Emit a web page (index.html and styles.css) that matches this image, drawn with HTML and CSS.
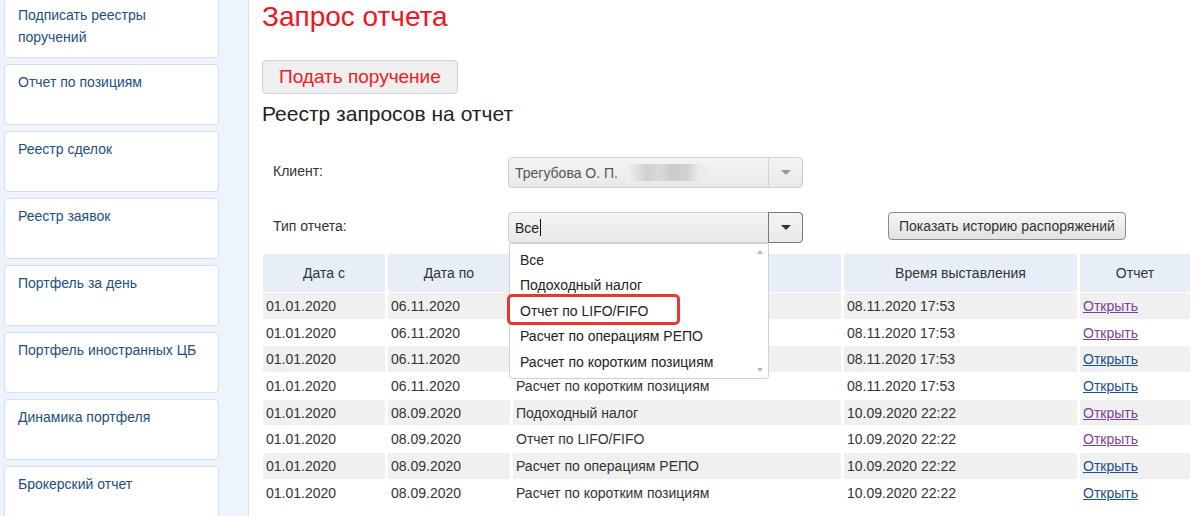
FILE: index.html
```html
<!DOCTYPE html>
<html lang="ru">
<head>
    <meta charset="UTF-8">
    <title>Запрос отчета</title>
    <link rel="stylesheet" href="styles.css">
</head>
<body>

<div class="page">
    <!-- МЕНЮ -->
    <div class="sidebar">
        <div class="menu">
            <a class="menu-item">Подписать реестры поручений</a>
            <a class="menu-item">Отчет по позициям</a>
            <a class="menu-item">Реестр сделок</a>
            <a class="menu-item">Реестр заявок</a>
            <a class="menu-item">Портфель за день</a>
            <a class="menu-item">Портфель иностранных ЦБ</a>
            <a class="menu-item">Динамика портфеля</a>
            <a class="menu-item">Брокерский отчет</a>
        </div>
    </div>

    <!-- КОНТЕНТ -->
    <div class="content">
        <div class="judul">Запрос отчета</div>
        <button class="btn-order">Подать поручение</button>
        <div class="subjudul">Реестр запросов на отчет</div>

        <div class="form-row">
            <label>Клиент:</label>
            <div class="combo disabled">
                <span class="combo-text">Трегубова О. П. <span class="blur"></span></span>
                <span class="combo-arrow"><span class="tri"></span></span>
            </div>
        </div>
        <div class="form-row">
            <label>Тип отчета:</label>
            <div class="combo active">
                <span class="combo-text">Все<span class="caret"></span></span>
                <span class="combo-arrow"><span class="tri"></span></span>
                <div class="dropdown">
                    <div class="dd-item">Все</div>
                    <div class="dd-item">Подоходный налог</div>
                    <div class="dd-item">Отчет по LIFO/FIFO</div>
                    <div class="dd-item">Расчет по операциям РЕПО</div>
                    <div class="dd-item">Расчет по коротким позициям</div>
                    <div class="dd-scroll">
                        <span class="sc-up"></span>
                        <span class="sc-down"></span>
                    </div>
                    <div class="highlight"></div>
                </div>
            </div>
            <button class="btn-history">Показать историю распоряжений</button>
        </div>

        <table class="registry">
            <thead>
                <tr>
                    <th class="c1">Дата с</th>
                    <th class="c2">Дата по</th>
                    <th class="c3">Тип отчета</th>
                    <th class="c4">Время выставления</th>
                    <th class="c5">Отчет</th>
                </tr>
            </thead>
            <tbody>
                <tr class="odd"><td>01.01.2020</td><td>06.11.2020</td><td>Подоходный налог</td><td>08.11.2020 17:53</td><td><a class="visited">Открыть</a></td></tr>
                <tr><td>01.01.2020</td><td>06.11.2020</td><td>Отчет по LIFO/FIFO</td><td>08.11.2020 17:53</td><td><a class="visited">Открыть</a></td></tr>
                <tr class="odd"><td>01.01.2020</td><td>06.11.2020</td><td>Расчет по операциям РЕПО</td><td>08.11.2020 17:53</td><td><a>Открыть</a></td></tr>
                <tr><td>01.01.2020</td><td>06.11.2020</td><td>Расчет по коротким позициям</td><td>08.11.2020 17:53</td><td><a>Открыть</a></td></tr>
                <tr class="odd"><td>01.01.2020</td><td>08.09.2020</td><td>Подоходный налог</td><td>10.09.2020 22:22</td><td><a class="visited">Открыть</a></td></tr>
                <tr><td>01.01.2020</td><td>08.09.2020</td><td>Отчет по LIFO/FIFO</td><td>10.09.2020 22:22</td><td><a class="visited">Открыть</a></td></tr>
                <tr class="odd"><td>01.01.2020</td><td>08.09.2020</td><td>Расчет по операциям РЕПО</td><td>10.09.2020 22:22</td><td><a>Открыть</a></td></tr>
                <tr><td>01.01.2020</td><td>08.09.2020</td><td>Расчет по коротким позициям</td><td>10.09.2020 22:22</td><td><a>Открыть</a></td></tr>
            </tbody>
        </table>
    </div>
</div>

</body>
</html>
```

FILE: styles.css
```css
body {
    margin: 0;
    font-family: "Liberation Sans", Arial, sans-serif;
    background-color: white;
    color: #333;
    overflow: hidden;
}

.page {
    display: flex;
    height: 516px;
}

/* меню слева */
.sidebar {
    width: 248px;
    flex-shrink: 0;
    background-color: #eef4fc;
    border-right: 1px solid #d7e3f3;
    overflow: hidden;
}

.menu {
    display: flex;
    flex-direction: column;
    gap: 6px;
    margin-top: -3px;
    padding-left: 4px;
}

.menu-item {
    display: block;
    box-sizing: border-box;
    width: 215px;
    height: 61px;
    flex-shrink: 0;
    padding: 6px 12px 0 13px;
    background-color: white;
    border: 1px solid #d3dff0;
    border-radius: 4px;
    color: #1d4f80;
    font-size: 14px;
    line-height: 22px;
}

/* основная часть */
.content {
    flex: 1;
    padding-left: 13px;
}

.judul {
    color: #f0141e;
    font-size: 28px;
    line-height: 34px;
}

.btn-order {
    display: block;
    margin-top: 26px;
    height: 34px;
    padding: 0 16px;
    background-color: #efefef;
    border: 1px solid #c8d4e4;
    border-radius: 4px;
    color: #ee1c25;
    font-family: inherit;
    font-size: 19px;
}

.subjudul {
    margin-top: 7px;
    color: #222;
    font-size: 21px;
    line-height: 26px;
}

.form-row {
    display: flex;
    align-items: center;
    margin-top: 30px;
}

.form-row + .form-row {
    margin-top: 24px;
}

.form-row label {
    box-sizing: border-box;
    width: 246px;
    padding-left: 11px;
    font-size: 14px;
    color: #333;
    margin-top: -3px;
}

.combo {
    position: relative;
    display: flex;
    box-sizing: border-box;
    width: 295px;
    height: 31px;
    background: linear-gradient(#f4f4f4, #e9e9e9);
    border: 1px solid #cfcfcf;
    border-radius: 4px;
    font-size: 14px;
}

.combo-text {
    flex: 1;
    display: flex;
    align-items: center;
    padding-left: 6px;
    color: #555;
}

.combo.active .combo-text {
    color: #222;
}

.blur {
    display: inline-block;
    width: 82px;
    height: 17px;
    margin-left: 8px;
    background: linear-gradient(90deg, #f2f2f2 0, #e2e2e2 12%, #d0d0d0 25%, #dadada 40%, #cbcbcb 55%, #d2d2d2 75%, #ececec 90%);
}

.caret {
    display: inline-block;
    width: 1px;
    height: 17px;
    margin-left: 1px;
    background-color: #111;
}

.combo-arrow {
    display: flex;
    align-items: center;
    justify-content: center;
    width: 33px;
    border-left: 1px solid #d2d2d2;
}

.combo.active .combo-arrow {
    margin: -1px -1px -1px 0;
    border: 1px solid #7a7a7a;
    border-radius: 0 4px 4px 0;
}

.tri {
    width: 0;
    height: 0;
    border-left: 5px solid transparent;
    border-right: 5px solid transparent;
    border-top: 5px solid #999;
}

.combo.active .tri {
    border-top-color: #333;
}

.btn-history {
    margin-left: 85px;
    margin-top: -3px;
    height: 28px;
    padding: 0 10px;
    background: linear-gradient(#f7f7f7, #e1e1e1);
    border: 1px solid #8a8a8a;
    border-radius: 4px;
    color: #333;
    font-family: inherit;
    font-size: 14px;
}

/* выпадающий список */
.dropdown {
    position: absolute;
    left: 0;
    top: 30px;
    z-index: 5;
    box-sizing: border-box;
    width: 260px;
    height: 136px;
    padding-top: 4px;
    background-color: white;
    border: 1px solid #c9d3df;
    border-radius: 0 0 3px 3px;
}

.dd-item {
    height: 25.4px;
    line-height: 25.4px;
    padding-left: 10px;
    color: #222;
    font-size: 14px;
}

.dd-scroll {
    position: absolute;
    right: 0;
    top: 0;
    bottom: 0;
    width: 14px;
}

.sc-up, .sc-down {
    position: absolute;
    left: 3px;
    width: 0;
    height: 0;
    border-left: 3px solid transparent;
    border-right: 3px solid transparent;
}

.sc-up {
    top: 6px;
    border-bottom: 4px solid #b8b8b8;
}

.sc-down {
    bottom: 6px;
    border-top: 4px solid #b8b8b8;
}

.highlight {
    position: absolute;
    left: -3px;
    top: 50px;
    width: 173px;
    height: 31px;
    box-sizing: border-box;
    border: 3px solid #e53a33;
    border-radius: 5px;
}

/* таблица */
.registry {
    margin-top: 10px;
    margin-left: -2px;
    width: 933px;
    table-layout: fixed;
    border-collapse: separate;
    border-spacing: 3px 1px;
    font-size: 14px;
    color: #333;
}

.registry th {
    box-sizing: border-box;
    height: 38px;
    padding: 0;
    background-color: #e7eef8;
    font-weight: normal;
    text-align: center;
}

.registry td {
    height: 25.7px;
    padding: 0 0 0 3px;
}

.registry tr.odd td {
    background-color: #f0f0f0;
}

.c1 { width: 122px; }
.c2 { width: 122px; }
.c3 { width: 328px; }
.c4 { width: 233px; }
.c5 { width: 110px; }

.registry a {
    color: #1a4f8e;
    text-decoration: underline;
    cursor: pointer;
}

.registry a.visited {
    color: #7d3f98;
}
```
